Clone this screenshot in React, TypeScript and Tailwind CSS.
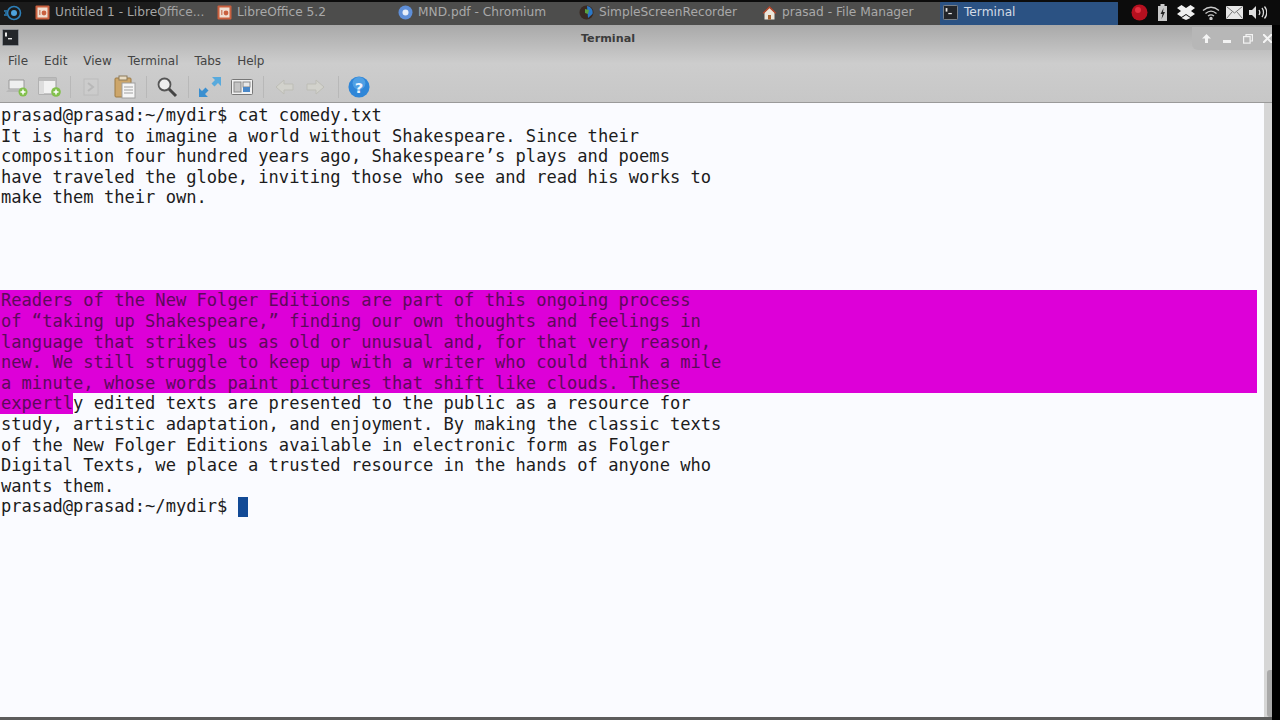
import React from "react";

const F = "[font-family:'DejaVu_Sans',sans-serif]";

function LoIcon() {
  return (
    <svg width="15" height="15" viewBox="0 0 15 15" className="shrink-0">
      <rect x="0.5" y="0.5" width="14" height="14" rx="1" fill="#c9603f" />
      <rect x="2.5" y="2.5" width="10" height="10" fill="#f0dfd2" />
      <circle cx="9" cy="8" r="2.4" fill="#c9603f" />
      <rect x="4" y="5" width="1.5" height="5" fill="#d08a70" />
    </svg>
  );
}
function TermIcon({ size = 17 }: { size?: number }) {
  return (
    <svg width={size} height={size} viewBox="0 0 17 17" className="shrink-0">
      <rect x="0.5" y="0.5" width="16" height="16" rx="1" fill="#23262a" stroke="#8b8f94" />
      <rect x="3" y="3.5" width="2" height="4" fill="#e8e8e8" />
      <rect x="6" y="9" width="4" height="1.4" fill="#e8e8e8" />
    </svg>
  );
}
function Task({ w, icon, label, className = "" }: { w: string; icon: React.ReactNode; label: string; className?: string }) {
  return (
    <div className={`flex items-center h-full overflow-hidden shrink-0 ${w} ${className}`}>
      {icon}
      <span className="ml-[5px] whitespace-nowrap">{label}</span>
    </div>
  );
}
function Sep({ className }: { className: string }) {
  return <div className={`w-px h-[22px] bg-[#b8b8b8] shrink-0 ${className}`} />;
}

const lines = [
  "prasad@prasad:~/mydir$ cat comedy.txt",
  "It is hard to imagine a world without Shakespeare. Since their",
  "composition four hundred years ago, Shakespeare’s plays and poems",
  "have traveled the globe, inviting those who see and read his works to",
  "make them their own.",
  "",
  "",
  "",
  "",
];
const selected = [
  "Readers of the New Folger Editions are part of this ongoing process",
  "of “taking up Shakespeare,” finding our own thoughts and feelings in",
  "language that strikes us as old or unusual and, for that very reason,",
  "new. We still struggle to keep up with a writer who could think a mile",
  "a minute, whose words paint pictures that shift like clouds. These",
];
const after = [
  "study, artistic adaptation, and enjoyment. By making the classic texts",
  "of the New Folger Editions available in electronic form as Folger",
  "Digital Texts, we place a trusted resource in the hands of anyone who",
  "wants them.",
];

export default function App() {
  return (
    <div className={`w-[1280px] h-[720px] overflow-hidden flex flex-col bg-[#fafbff] ${F}`}>
      {/* Top panel */}
      <div className="h-[25px] shrink-0 flex bg-[#4d4d4c] border-t-2 border-[#0c0c0c] text-[12.2px] text-[#a9a9a9]">
        <div className="w-[160px] h-full bg-[#1b1b1b] flex items-center shrink-0 pb-[2px]">
          <svg width="20" height="18" viewBox="0 0 20 18" className="ml-[3px] shrink-0">
            <circle cx="11" cy="9" r="6.5" fill="none" stroke="#2d7fb8" strokeWidth="1.6" />
            <circle cx="11" cy="9" r="3" fill="#4ea2dc" />
            <path d="M1 7h3M1 11h3M2 9h2" stroke="#2d7fb8" strokeWidth="1.4" />
          </svg>
          <div className="ml-[12px]"><LoIcon /></div>
          <span className="ml-[5px] whitespace-nowrap text-[#a4a4a4]">Untitled 1 - LibreOffice...</span>
        </div>
        <div className="flex items-center shrink-0 h-full">
          <Task w="w-[238px] pl-[57px] pb-[2px]" icon={<LoIcon />} label="LibreOffice 5.2" />
          <Task
            w="w-[181px] pb-[2px]"
            icon={
              <svg width="15" height="15" viewBox="0 0 15 15" className="shrink-0">
                <circle cx="7.5" cy="7.5" r="7" fill="#5f8fd8" />
                <circle cx="7.5" cy="7.5" r="3" fill="#e6eefa" />
              </svg>
            }
            label="MND.pdf - Chromium"
          />
          <Task
            w="w-[183px] pb-[2px]"
            icon={
              <svg width="15" height="15" viewBox="0 0 15 15" className="shrink-0">
                <circle cx="7.5" cy="7.5" r="7" fill="#3a2a22" />
                <path d="M8 1a6.5 6.5 0 0 1 5.5 8L9 13z" fill="#2a78c8" />
                <path d="M6 4l4 1-1 4-3-1z" fill="#5aa040" />
              </svg>
            }
            label="SimpleScreenRecorder"
          />
          <Task
            w="w-[178px] pb-[2px]"
            icon={
              <svg width="15" height="15" viewBox="0 0 15 15" className="shrink-0">
                <path d="M2.5 7.5v7h10v-7L7.5 2.500z" fill="#ece6da" />
                <path d="M.5 8L7.5 1l7 7-1.200.8L7.500 3.200 1.700 8.800z" fill="#b5482c" />
                <rect x="6" y="10" width="3" height="4.500" fill="#a85f2c" />
              </svg>
            }
            label="prasad - File Manager"
          />
          <div className="w-[178px] h-full flex items-center bg-[#2b5283] text-[#d3dbe6] pl-[3px] pb-[2px] shrink-0 rounded-[1px]">
            <TermIcon size={15} />
            <span className="ml-[6px]">Terminal</span>
          </div>
        </div>
        <div className="flex-1 h-full bg-[#0c0c0c] flex items-center shrink-0 pl-[13px] pb-[2px]">
          <svg width="17" height="17" viewBox="0 0 17 17" className="shrink-0"><circle cx="8.5" cy="8.5" r="8" fill="#b5101f" /><circle cx="7" cy="6" r="3" fill="#e03040" /></svg>
          <svg width="11" height="17" viewBox="0 0 11 17" className="ml-[9px] shrink-0"><rect x="3.5" y="0" width="4" height="2" fill="#ccc" /><rect x="1" y="2" width="9" height="15" fill="#c8c8c8" /><path d="M6.5 4L3.5 10h2l-1 5 3.500-7H6z" fill="#222" /></svg>
          <svg width="18" height="15" viewBox="0 0 18 15" className="ml-[9px] shrink-0"><path d="M0 3l4.500-3L9 3l4.500-3L18 3l-4 3 4 3-4.500 3L9 9 4.500 12 0 9l4-3zM4.500 13L9 10l4.500 3L9 15z" fill="#f0f0f0" /></svg>
          <svg width="18" height="14" viewBox="0 0 18 14" fill="none" stroke="#c8c8c8" strokeWidth="1.400" className="ml-[7px] shrink-0"><path d="M1 4.500c5-4 11-4 16 0M3.500 7.500c3.500-3 7.500-3 11 0M6 10c2-1.500 4-1.500 6 0" /><circle cx="9" cy="12.500" r="1" fill="#c8c8c8" /></svg>
          <svg width="17" height="13" viewBox="0 0 17 13" className="ml-[6px] shrink-0"><rect width="17" height="13" fill="#e8e8e8" /><path d="M.5.500L8.500 7l8-6.500M.5 12.500l5.500-6.500M16.500 12.500L11 6" fill="none" stroke="#777" /></svg>
          <svg width="18" height="15" viewBox="0 0 18 15" fill="none" stroke="#ddd" strokeWidth="1.300" className="ml-[6px] shrink-0"><path d="M0 5h3l4-4v13l-4-4H0z" fill="#ddd" stroke="none" /><path d="M10 5c1 1.500 1 3.500 0 5M13 3c2 2.500 2 6.500 0 9M15.500 1.500c3 3.500 3 8.500 0 12" /></svg>
        </div>
      </div>

      {/* Window + right black edge */}
      <div className="flex-1 min-h-0 flex bg-black">
        <div className="flex-1 min-w-0 flex flex-col border-b-[3px] border-[#5c5c5c]">
          {/* Chrome */}
          <div className="relative h-[78px] shrink-0 flex flex-col border-b border-[#9a9a9a] bg-gradient-to-b from-[#a9a9a9] via-[#cdcdcd] to-[#c7c7c7]">
            <div className="h-[25px] shrink-0 flex items-center relative pl-[2px]">
              <TermIcon />
              <div className="absolute left-0 right-0 top-0 h-full flex items-center justify-center pr-[56px] pt-[3px] text-[11.2px] font-bold text-[#3c3c3c]">
                Terminal
              </div>
            </div>
            <div className="absolute right-0 top-[2px] w-[80px] h-[23px] bg-[#b7b7b7] rounded-bl-[6px] flex items-center pl-[10px]">
              <svg width="9" height="9" viewBox="0 0 9 9" className="shrink-0"><path d="M4.500 0L9 4.500H6V9H3V4.500H0z" fill="#f4f4f4" /></svg>
              <div className="ml-[12px] w-[8px] h-[3px] mt-[6px] bg-[#f2f2f2] shrink-0" />
              <svg width="10" height="10" viewBox="0 0 10 10" fill="none" stroke="#f2f2f2" strokeWidth="1.200" className="ml-[12px] shrink-0"><rect x="0.600" y="2.600" width="6.500" height="6.500" /><path d="M3 2.500V.6h6.400V7H7.200" /></svg>
              <svg width="9" height="9" viewBox="0 0 9 9" stroke="#f4f4f4" strokeWidth="2" className="ml-[10px] shrink-0"><path d="M0 0l9 9M9 0L0 9" /></svg>
            </div>
            <div className="h-[22px] shrink-0 flex items-center pl-[8px] gap-[16px] text-[12px] text-[#444]">
              <span>File</span>
              <span>Edit</span>
              <span>View</span>
              <span>Terminal</span>
              <span>Tabs</span>
              <span>Help</span>
            </div>
            <div className="h-[30px] shrink-0 flex items-center pl-[5px]">
              <svg width="24" height="20" viewBox="0 0 24 20" className="shrink-0">
                <path d="M4 3h15v9H4z" fill="#efefef" stroke="#999" />
                <path d="M1 15l3-3h15l-1 3z" fill="#b8b8b8" />
                <circle cx="18" cy="15" r="4.500" fill="#82c04c" />
                <path d="M18 12.500v5M15.500 15h5" stroke="#fff" strokeWidth="1.500" />
              </svg>
              <svg width="24" height="22" viewBox="0 0 24 22" className="ml-[9px] shrink-0">
                <rect x="1" y="2" width="17" height="16" fill="#f2f2f2" stroke="#999" />
                <rect x="1" y="2" width="17" height="3" fill="#bbb" />
                <rect x="1" y="5" width="5" height="13" fill="#ddd" />
                <circle cx="18" cy="16" r="4.800" fill="#82c04c" />
                <path d="M18 13.500v5M15.500 16h5" stroke="#fff" strokeWidth="1.500" />
              </svg>
              <Sep className="ml-[8px]" />
              <svg width="16" height="20" viewBox="0 0 16 20" className="ml-[12px] shrink-0 opacity-50">
                <rect x="1" y="2" width="14" height="16" fill="#cfcfcf" stroke="#b0b0b0" />
                <path d="M5 6l5 4-5 4" fill="none" stroke="#a8a8a8" strokeWidth="2" />
              </svg>
              <svg width="22" height="24" viewBox="0 0 22 24" className="ml-[15px] shrink-0">
                <rect x="1" y="3" width="16" height="19" rx="1" fill="#cda66a" stroke="#9c7a44" />
                <rect x="5" y="1" width="8" height="4" fill="#e8dcc4" stroke="#8c7a5a" />
                <rect x="8" y="8" width="13" height="15" fill="#f6f6f6" stroke="#a0a0a0" />
                <path d="M10 12h9M10 15h9M10 18h9" stroke="#a0a0a0" />
              </svg>
              <Sep className="ml-[10px]" />
              <svg width="22" height="22" viewBox="0 0 22 22" fill="none" className="ml-[9px] shrink-0">
                <circle cx="8.500" cy="8.500" r="6" stroke="#555" strokeWidth="1.800" fill="#eee" />
                <path d="M13 13l7 7" stroke="#444" strokeWidth="3" />
              </svg>
              <Sep className="ml-[10px]" />
              <svg width="24" height="24" viewBox="0 0 24 24" className="ml-[9px] shrink-0">
                <path d="M14 2h9v9l-3-3-3.500 3.500-3-3L17 5z" fill="#58aadd" />
                <path d="M10 22H1v-9l3 3 3.500-3.500 3 3L7 19z" fill="#3a8fd0" />
              </svg>
              <svg width="22" height="16" viewBox="0 0 22 16" className="ml-[9px] shrink-0">
                <rect x="0.500" y="0.500" width="21" height="15" rx="1" fill="#f2f2f2" stroke="#777" />
                <rect x="3" y="3" width="7" height="10" fill="#c4c4c4" stroke="#888" />
                <rect x="12" y="3" width="7" height="5" fill="#e8e8e8" stroke="#888" />
                <rect x="12" y="8" width="7" height="5" fill="#4a88c8" />
              </svg>
              <Sep className="ml-[10px]" />
              <svg width="20" height="18" viewBox="0 0 20 18" className="ml-[11px] shrink-0">
                <path d="M1 9l8-7v4h9v6H9v4z" fill="#d2d2cc" stroke="#bdbdb6" />
              </svg>
              <svg width="20" height="18" viewBox="0 0 20 18" className="ml-[10px] shrink-0">
                <path d="M19 9l-8-7v4H2v6h9v4z" fill="#d2d2cc" stroke="#bdbdb6" />
              </svg>
              <Sep className="ml-[13px]" />
              <svg width="22" height="22" viewBox="0 0 24 24" className="ml-[9px] shrink-0">
                <circle cx="12" cy="12" r="11.500" fill="#2f86d8" />
                <circle cx="12" cy="8" r="7" fill="#68b2ec" opacity="0.600" />
                <text x="12" y="18" textAnchor="middle" fontSize="16" fontWeight="bold" fill="#eef6ff" fontFamily="DejaVu Sans, sans-serif">?</text>
              </svg>
            </div>
          </div>

          {/* Terminal area */}
          <div className="flex-1 min-h-0 flex bg-[#fafbff]">
            <div className="flex-1 min-w-0 pt-[2px] text-[17.1px] leading-[20.6px] text-[#1c1c1c] [font-family:'DejaVu_Sans_Mono',monospace] whitespace-pre">
              {lines.map((l, i) => (
                <div key={i} className="h-[20.6px] pl-[1px]">{l}</div>
              ))}
              <div className="w-[1257px] pl-[1px] bg-[#dd00d8] text-[#5c0a5a]">
                {selected.map((l, i) => (
                  <div key={i} className="h-[20.6px]">{l}</div>
                ))}
              </div>
              <div className="h-[20.6px]">
                <span className="pl-[1px] bg-[#dd00d8] text-[#5c0a5a] inline-block h-[20.6px]">expertl</span>
                y edited texts are presented to the public as a resource for
              </div>
              {after.map((l, i) => (
                <div key={i} className="h-[20.6px] pl-[1px]">{l}</div>
              ))}
              <div className="h-[20.6px] pl-[1px] flex items-center">
                <span>prasad@prasad:~/mydir$ </span>
                <span className="w-[10px] h-[20px] bg-[#124a96]" />
              </div>
            </div>
            <div className="w-[8px] shrink-0 bg-[#d6d6d6] flex flex-col justify-end">
              <div className="h-[47px] ml-[3px] w-[5px] rounded-l-[3px] bg-[#a9a9a9]" />
            </div>
          </div>
        </div>
        <div className="w-[8px] shrink-0 bg-black" />
      </div>
    </div>
  );
}
